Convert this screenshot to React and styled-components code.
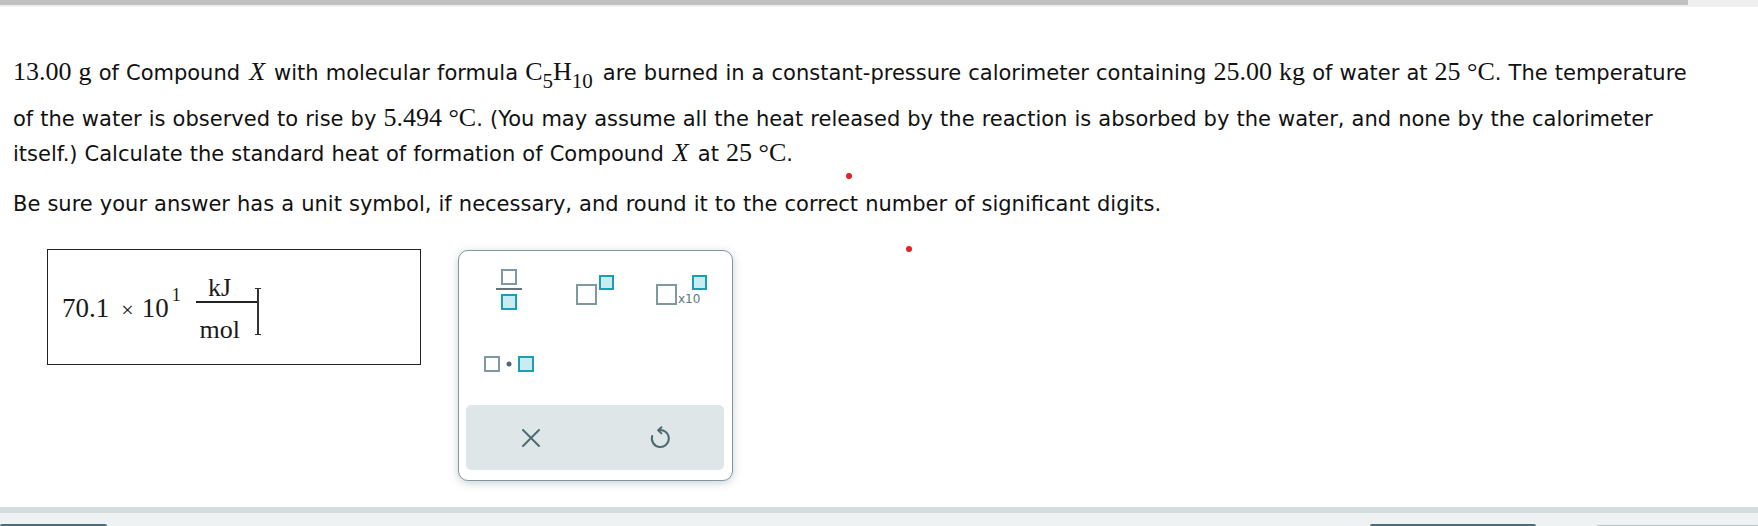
import React from 'react';
import styled, { createGlobalStyle } from 'styled-components';

const GlobalStyle = createGlobalStyle`
  html, body {
    margin: 0;
    padding: 0;
    background: #fff;
  }
  body {
    font-family: "DejaVu Sans", Verdana, sans-serif;
    color: #111;
  }
`;

const Page = styled.div`
  position: relative;
  height: 526px;
  display: flex;
  flex-direction: column;
  overflow: hidden;
`;

const TopBar = styled.div`
  flex: none;
  height: 7px;
  background: #efefef;
`;

const Progress = styled.div`
  width: 1688px;
  height: 5px;
  background: #c0c0c0;
`;

const Main = styled.main`
  flex: 1;
  padding: 47px 0 0 13px;
`;

const Line = styled.div`
  height: 35px;
  margin-top: ${({ $gap }) => $gap || 0}px;
  font-size: 21px;
  line-height: 35px;
  word-spacing: 0.4px;
  white-space: nowrap;
`;

const M = styled.span`
  font-family: "Liberation Serif", "Times New Roman", serif;
  font-size: 26px;
  word-spacing: 0;
  font-style: ${({ $italic }) => ($italic ? 'italic' : 'normal')};
  margin: 0 ${({ $italic }) => ($italic ? 2 : 0)}px;
`;

const Sub = styled.span`
  font-family: "Liberation Serif", "Times New Roman", serif;
  font-size: 21px;
  line-height: 0;
  vertical-align: -8px;
  margin-right: ${({ $end }) => ($end ? 3 : 0)}px;
`;

const RedDot = styled.span`
  position: absolute;
  left: ${({ $x }) => $x - 3}px;
  top: ${({ $y }) => $y - 3}px;
  width: 6px;
  height: 6px;
  border-radius: 50%;
  background: #e62222;
`;

const AnswerRow = styled.div`
  display: flex;
  align-items: flex-start;
  gap: 37px;
  margin-top: 27px;
  padding-left: 34px;
`;

const AnswerBox = styled.div`
  box-sizing: border-box;
  width: 374px;
  height: 116px;
  border: 1px solid #222;
  display: flex;
  align-items: flex-start;
  padding-left: 14px;
  font-family: "Liberation Serif", "Times New Roman", serif;
  color: #1a1a1a;
`;

const Num = styled.span`
  margin-top: 45px;
  font-size: 27px;
  line-height: 26px;
  white-space: pre;
`;

const Times = styled.span`
  margin: 0 8px 0 12px;
  font-size: 22px;
`;

const Power = styled.span`
  margin: 36px 0 0 3px;
  font-size: 18px;
  line-height: 18px;
`;

const Fraction = styled.span`
  position: relative;
  display: inline-flex;
  flex-direction: column;
  align-items: flex-start;
  margin: 25px 0 0 15px;
  font-size: 26px;
`;

const FracPart = styled.span`
  width: 48px;
  text-align: center;
  height: ${({ $h }) => $h}px;
  line-height: 26px;
  padding-top: ${({ $pad }) => $pad || 0}px;
`;

const FracBar = styled.span`
  width: 62px;
  height: 1.5px;
  background: #222;
`;

const Caret = styled.span`
  position: absolute;
  right: -1px;
  top: 13px;
  width: 1.5px;
  height: 47px;
  background: #333;

  &::before,
  &::after {
    content: '';
    position: absolute;
    left: -2px;
    width: 5.5px;
    height: 1px;
    background: #333;
  }
  &::before {
    top: 0;
  }
  &::after {
    bottom: 0;
  }
`;

const Palette = styled.div`
  box-sizing: border-box;
  width: 275px;
  height: 231px;
  margin-top: 1px;
  padding: 2px 8px 10px 7px;
  border: 1px solid #7f979f;
  border-radius: 10px;
  background: #fff;
  box-shadow: 0 2px 8px rgba(50, 70, 80, 0.25);
  display: flex;
  flex-direction: column;
`;

const KeyGrid = styled.div`
  display: grid;
  grid-template-columns: repeat(3, 86px);
  grid-auto-rows: 74px;
`;

const Key = styled.button`
  display: flex;
  align-items: center;
  justify-content: center;
  padding: 0;
  border: none;
  background: transparent;
  cursor: pointer;
`;

const ActionBar = styled.div`
  display: grid;
  grid-template-columns: 1fr 1fr;
  height: 67px;
  margin-top: 4px;
  border-radius: 5px;
  background: #dfe6e8;
`;

const Footer = styled.footer`
  flex: none;
  height: 13px;
  border-top: 6px solid #d3dcdf;
  background: #eef2f3;
  display: flex;
  align-items: flex-end;
  overflow: hidden;
`;

const NavButton = styled.span`
  flex: none;
  width: ${({ $w }) => $w}px;
  height: ${({ $light }) => ($light ? 1 : 2)}px;
  margin-left: ${({ $ml }) => $ml || 0}px;
  border-radius: 8px 8px 0 0;
  background: ${({ $light }) => ($light ? '#b7c5c9' : '#4b6f7a')};
`;

const GRAY = '#7f99a1';
const TEAL = '#1b9db3';
const TEAL_FILL = '#c9ecf3';
const INK = '#4d6a73';

const FractionIcon = () => (
  <svg width="28" height="42" viewBox="0 0 28 42">
    <rect x="7" y="1" width="14" height="14" fill="#fff" stroke={GRAY} strokeWidth="2" />
    <rect x="1" y="19" width="26" height="2" fill="#5b7880" />
    <rect x="7" y="26" width="14" height="14" fill={TEAL_FILL} stroke={TEAL} strokeWidth="2" />
  </svg>
);

const PowerIcon = () => (
  <svg width="40" height="32" viewBox="0 0 40 32">
    <rect x="2" y="11" width="19" height="19" fill="#fff" stroke={GRAY} strokeWidth="2" />
    <rect x="25" y="2" width="13" height="13" fill={TEAL_FILL} stroke={TEAL} strokeWidth="2" />
  </svg>
);

const SciIcon = () => (
  <svg width="53" height="32" viewBox="0 0 53 32">
    <rect x="2" y="11" width="19" height="19" fill="#fff" stroke={GRAY} strokeWidth="2" />
    <text x="23" y="29" fontSize="12" fontFamily="DejaVu Sans, sans-serif" fill="#5b7880">
      x10
    </text>
    <rect x="38" y="2" width="13" height="13" fill={TEAL_FILL} stroke={TEAL} strokeWidth="2" />
  </svg>
);

const DotIcon = () => (
  <svg width="50" height="16" viewBox="0 0 50 16">
    <rect x="1" y="1" width="14" height="14" fill="#fff" stroke={GRAY} strokeWidth="2" />
    <circle cx="25" cy="8" r="2.5" fill={INK} />
    <rect x="35" y="1" width="14" height="14" fill={TEAL_FILL} stroke={TEAL} strokeWidth="2" />
  </svg>
);

const ClearIcon = () => (
  <svg width="20" height="20" viewBox="0 0 20 20">
    <path d="M2 2 L18 18 M18 2 L2 18" stroke={INK} strokeWidth="2" strokeLinecap="round" />
  </svg>
);

const UndoIcon = () => (
  <svg width="24" height="26" viewBox="0 0 24 26">
    <path
      d="M10.5 5.2 A8.5 8.5 0 1 1 4.2 11"
      fill="none"
      stroke={INK}
      strokeWidth="2"
      strokeLinecap="round"
    />
    <path
      d="M13.4 2.2 L10.2 5.2 L13.4 8.4"
      fill="none"
      stroke={INK}
      strokeWidth="2"
      strokeLinecap="round"
      strokeLinejoin="round"
    />
  </svg>
);

const App = () => (
  <Page>
    <GlobalStyle />
    <TopBar>
      <Progress />
    </TopBar>
    <Main>
      <Line>
        <M>13.00</M> <M>g</M> of Compound <M $italic>X</M> with molecular formula <M>C</M>
        <Sub>5</Sub>
        <M>H</M>
        <Sub $end>10</Sub> are burned in a constant-pressure calorimeter containing{' '}
        <M>25.00</M> <M>kg</M> of water at <M>25 °C</M>. The temperature
      </Line>
      <Line $gap={11}>
        of the water is observed to rise by <M>5.494 °C</M>. (You may assume all the heat released
        by the reaction is absorbed by the water, and none by the calorimeter
      </Line>
      <Line>
        itself.) Calculate the standard heat of formation of Compound <M $italic>X</M> at{' '}
        <M>25 °C</M>.
      </Line>
      <Line $gap={17}>
        Be sure your answer has a unit symbol, if necessary, and round it to the correct number of
        significant digits.
      </Line>
      <AnswerRow>
        <AnswerBox>
          <Num>
            70.1<Times>×</Times>10
          </Num>
          <Power>1</Power>
          <Fraction>
            <FracPart $h={26}>kJ</FracPart>
            <FracBar />
            <FracPart $h={40} $pad={14}>
              mol
            </FracPart>
            <Caret />
          </Fraction>
        </AnswerBox>
        <Palette>
          <KeyGrid>
            <Key aria-label="fraction">
              <FractionIcon />
            </Key>
            <Key aria-label="superscript">
              <PowerIcon />
            </Key>
            <Key aria-label="scientific notation">
              <SciIcon />
            </Key>
            <Key aria-label="multiply">
              <DotIcon />
            </Key>
          </KeyGrid>
          <ActionBar>
            <Key aria-label="clear">
              <ClearIcon />
            </Key>
            <Key aria-label="undo">
              <UndoIcon />
            </Key>
          </ActionBar>
        </Palette>
      </AnswerRow>
    </Main>
    <Footer>
      <NavButton $w={107} />
      <NavButton $w={166} $ml={1263} />
      <NavButton $w={161} $ml={61} $light />
    </Footer>
    <RedDot $x={849} $y={176} />
    <RedDot $x={909} $y={249} />
  </Page>
);

export default App;
